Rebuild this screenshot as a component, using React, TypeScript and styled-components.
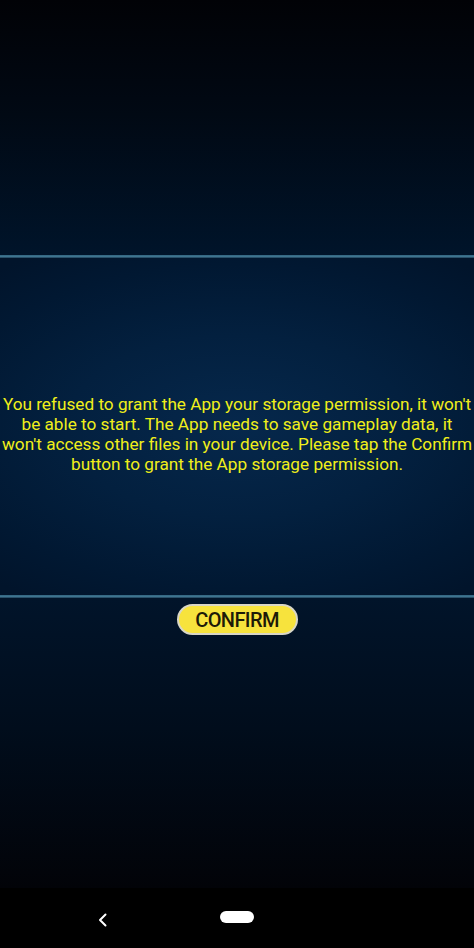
import styled, { createGlobalStyle } from "styled-components";

const GlobalStyle = createGlobalStyle`
  html, body {
    margin: 0;
    padding: 0;
    background: #000;
  }
  * {
    box-sizing: border-box;
  }
`;

const App = () => {
  return (
    <>
      <GlobalStyle />
      <Screen>
        <TopArea />
        <Divider />
        <Panel>
          <Message>
            You refused to grant the App your storage permission, it won't be
            able to start. The App needs to save gameplay data, it won't access
            other files in your device. Please tap the Confirm button to grant
            the App storage permission.
          </Message>
        </Panel>
        <Divider />
        <BottomArea>
          <ConfirmButton>CONFIRM</ConfirmButton>
        </BottomArea>
        <NavBar>
          <BackIcon width="14" height="16" viewBox="0 0 14 16">
            <path d="M9.5 2.5 L4 8 L9.5 13.5" />
          </BackIcon>
          <HomePill />
        </NavBar>
      </Screen>
    </>
  );
};

export default App;

const Screen = styled.div`
  display: flex;
  flex-direction: column;
  width: 474px;
  height: 948px;
  overflow: hidden;
  font-family: Roboto, "Liberation Sans", sans-serif;
`;

const TopArea = styled.div`
  height: 255px;
  background: linear-gradient(to bottom, #010206 0%, #010914 45%, #00142a 100%);
`;

const Divider = styled.div`
  height: 3px;
  background: linear-gradient(
    to bottom,
    #2f5f79 0%,
    #417a96 45%,
    #1d3d55 100%
  );
`;

const Panel = styled.div`
  height: 337px;
  display: flex;
  align-items: center;
  justify-content: center;
  padding: 15px 1px 0;
  background: radial-gradient(
    ellipse 80% 60% at 50% 50%,
    #06284c 0%,
    #03203f 45%,
    #011832 80%,
    #01142b 100%
  );
`;

const Message = styled.p`
  margin: 0;
  color: #f0ef1a;
  font-size: 17.2px;
  line-height: 20px;
  text-align: center;
`;

const BottomArea = styled.div`
  flex: 1;
  display: flex;
  flex-direction: column;
  align-items: center;
  padding-top: 6px;
  background: linear-gradient(to bottom, #01142a 0%, #010d1c 45%, #020308 100%);
`;

const ConfirmButton = styled.button`
  width: 121px;
  height: 31px;
  padding: 0;
  border: 2px solid #d8d6c6;
  border-radius: 16px;
  background: #f7e33d;
  color: #1d1a08;
  font-family: Roboto, "Liberation Sans", sans-serif;
  font-size: 20px;
  font-weight: 500;
  letter-spacing: -0.6px;
  cursor: pointer;
`;

const NavBar = styled.div`
  position: relative;
  height: 60px;
  flex-shrink: 0;
  display: flex;
  align-items: center;
  justify-content: center;
  background: #000;
`;

const BackIcon = styled.svg`
  position: absolute;
  left: 96px;
  top: 24px;
  fill: none;
  stroke: #fff;
  stroke-width: 2;
  stroke-linecap: round;
  stroke-linejoin: round;
`;

const HomePill = styled.div`
  width: 34px;
  height: 12px;
  margin-top: -2px;
  border-radius: 6px;
  background: #fff;
`;
